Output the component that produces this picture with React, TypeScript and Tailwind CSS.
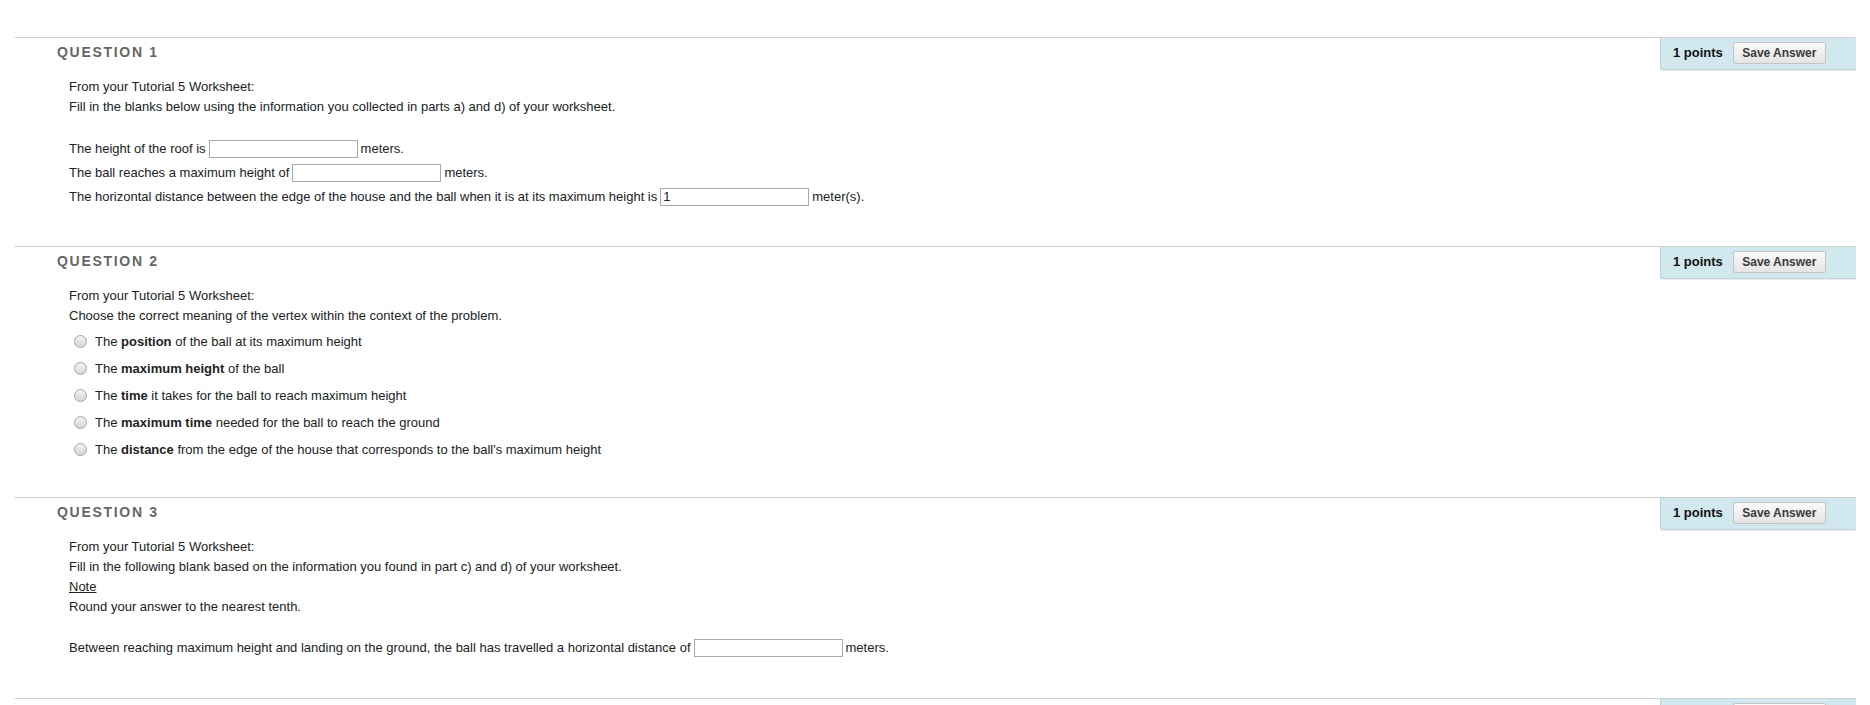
const font = { fontFamily: '"Liberation Sans", Arial, sans-serif' }

function PointsPanel() {
  return (
    <div className="flex h-[32px] w-[196px] shrink-0 items-start gap-[10px] rounded-bl-[3px] border-b border-l border-[#bfd4da] bg-[#d1e8ee] pl-[12px] pt-[4px] shadow-[0_1px_1px_rgba(0,0,0,0.08)]">
      <span className="flex h-[22px] items-center text-[13px] font-bold text-[#111]">1 points</span>
      <button className="flex h-[22px] w-[93px] items-center justify-center rounded-[2px] border border-[#c4c4c4] bg-gradient-to-b from-[#fafafa] to-[#e4e4e4] text-[12px] font-bold text-[#3a3a3a]">
        Save Answer
      </button>
    </div>
  )
}

function Blank({ value = '' }: { value?: string }) {
  return (
    <input
      readOnly
      value={value}
      className="mx-[3px] h-[18px] w-[149px] border border-[#a9a9a9] bg-white px-[2px] text-[13px] text-[#222] outline-none"
      style={font}
    />
  )
}

function Radio({ children }: { children: React.ReactNode }) {
  return (
    <div className="flex h-[27px] items-center">
      <span className="ml-[5px] mr-[8px] h-[13px] w-[13px] rounded-full border border-[#a3a3a3] bg-gradient-to-b from-[#f4f4f4] to-[#d6d6d6]" />
      <span>{children}</span>
    </div>
  )
}

function Question({ num, pb, children }: { num: number; pb: string; children?: React.ReactNode }) {
  return (
    <section className={`border-t border-[#cfcfcf] ${pb}`}>
      <div className="flex h-[32px] items-start justify-between">
        <h3 className="pl-[42px] pt-[5px] text-[14px] font-bold leading-[18px] tracking-[1.7px] text-[#666]">
          QUESTION {num}
        </h3>
        <PointsPanel />
      </div>
      {children && <div className="mt-[7px] pl-[54px] text-[13px] leading-[20px] text-[#222]">{children}</div>}
    </section>
  )
}

export default function App() {
  return (
    <div className="h-[705px] overflow-hidden bg-white pl-[15px] pr-[14px] pt-[37px]" style={font}>
      <Question num={1} pb="pb-[37px]">
        <p>From your Tutorial 5 Worksheet:</p>
        <p>Fill in the blanks below using the information you collected in parts a) and d) of your worksheet.</p>
        <div className="mt-[20px]">
          <div className="flex h-[24px] items-center">
            The height of the roof is<Blank />meters.
          </div>
          <div className="flex h-[24px] items-center">
            The ball reaches a maximum height of<Blank />meters.
          </div>
          <div className="flex h-[24px] items-center">
            The horizontal distance between the edge of the house and the ball when it is at its maximum height is
            <Blank value="1" />meter(s).
          </div>
        </div>
      </Question>

      <Question num={2} pb="pb-[34px]">
        <p>From your Tutorial 5 Worksheet:</p>
        <p>Choose the correct meaning of the vertex within the context of the problem.</p>
        <div className="mt-[2px]">
          <Radio>
            The <b>position</b> of the ball at its maximum height
          </Radio>
          <Radio>
            The <b>maximum height</b> of the ball
          </Radio>
          <Radio>
            The <b>time</b> it takes for the ball to reach maximum height
          </Radio>
          <Radio>
            The <b>maximum time</b> needed for the ball to reach the ground
          </Radio>
          <Radio>
            The <b>distance</b> from the edge of the house that corresponds to the ball&apos;s maximum height
          </Radio>
        </div>
      </Question>

      <Question num={3} pb="pb-[38px]">
        <p>From your Tutorial 5 Worksheet:</p>
        <p>Fill in the following blank based on the information you found in part c) and d) of your worksheet.</p>
        <p className="underline">Note</p>
        <p>Round your answer to the nearest tenth.</p>
        <div className="mt-[19px] flex h-[24px] items-center">
          Between reaching maximum height and landing on the ground, the ball has travelled a horizontal distance of
          <Blank />meters.
        </div>
      </Question>

      <Question num={4} pb="pb-[38px]" />
    </div>
  )
}
